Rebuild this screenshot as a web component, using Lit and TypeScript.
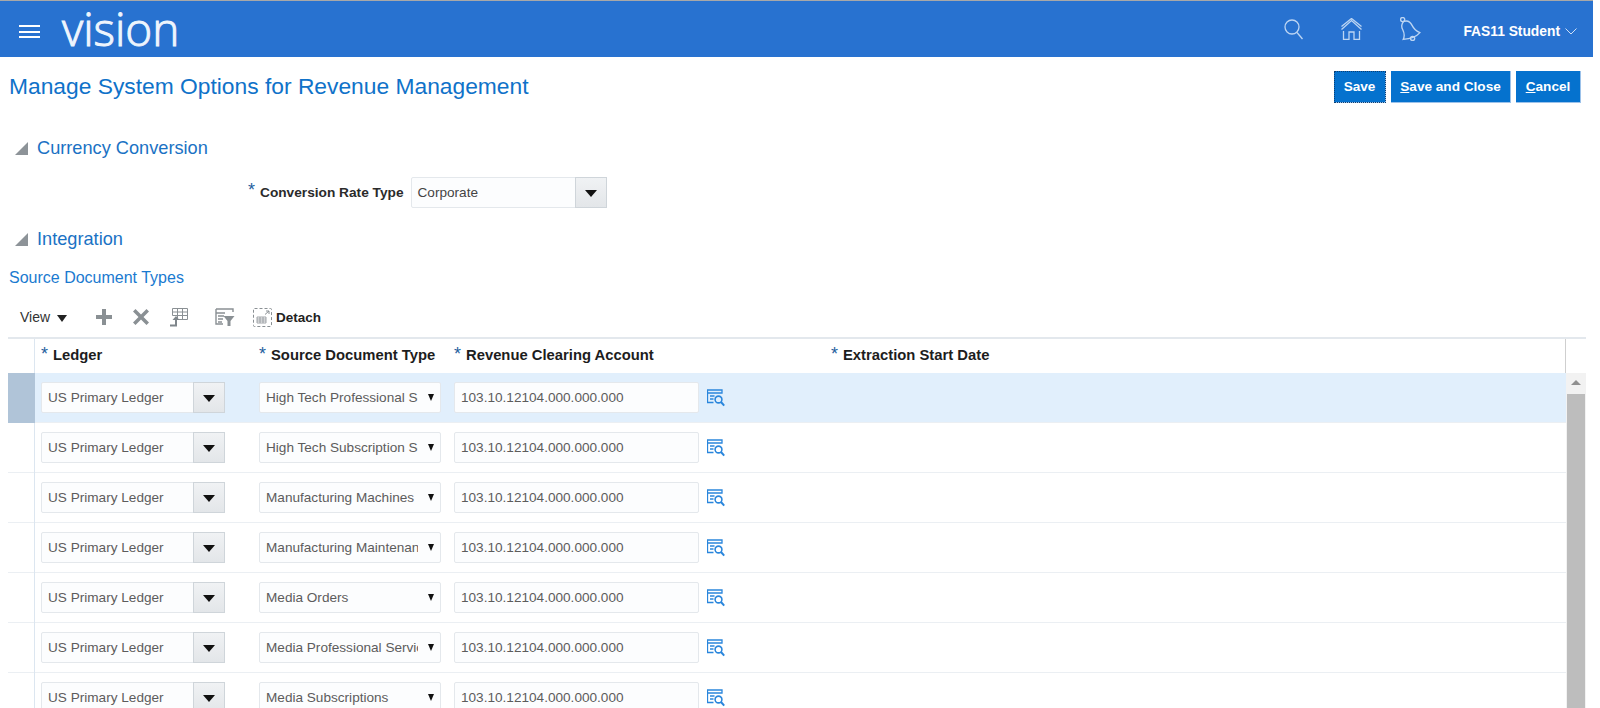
import { LitElement, css, html, svg } from 'lit';
import { customElement } from 'lit/decorators.js';

const sourceTypes = [
  'High Tech Professional Services',
  'High Tech Subscription Services',
  'Manufacturing Machines',
  'Manufacturing Maintenance',
  'Media Orders',
  'Media Professional Services',
  'Media Subscriptions',
];

const lookupIcon = html`<svg class="lookup" viewBox="0 0 18 18" width="18" height="18" fill="none" stroke="#2a86dc">
  <path d="M.5 1h14.500v3H.5zM.5 4v9.500h6M3 7h4.500M3 10h3.500" stroke-width="1.300"/>
  <circle cx="11.500" cy="10.500" r="3.400" stroke-width="1.600"/>
  <path d="M14 13l3.200 3.600" stroke-width="2"/>
</svg>`;

const searchIcon = svg`<circle cx="10" cy="9" r="7" /><path d="M15 14.500l5.500 6.500" />`;
const homeIcon = svg`<path d="M1.500 11.500L11.500 2.500L21.500 11.500M3.500 13v8.500h5.500v-7.500h5v7.500h5.500V13M1.500 8.500L11.500 0.500L21.500 8.500" />`;
const bellIcon = svg`<circle cx="2.500" cy="2.500" r="2" /><circle cx="12" cy="20.500" r="2" /><path d="M3.500 4.300C7 3 10 5 11.500 8c1.500 3 4 5.500 7.500 7-3 3.500-9 6-16 6.500 2-4 1-6.500-.5-9.500C1 9.500 1.500 6 3.500 4.300z" />`;

@customElement('app-root')
export class AppRoot extends LitElement {
  static styles = css`
    :host {
      display: block;
      height: 708px;
      overflow: hidden;
      background: #fff;
      font-family: 'Liberation Sans', Arial, sans-serif;
      color: #333;
    }
    .brand-bar {
      width: 1593px;
      height: 56px;
      box-sizing: content-box;
      border-top: 1px solid #a8a8a8;
      background: #2872d0;
      display: flex;
      align-items: center;
      color: #fff;
    }
    .burger {
      width: 21px;
      height: 13px;
      margin: 5px 0 0 19px;
      border-top: 2px solid #fff;
      border-bottom: 2px solid #fff;
      box-sizing: border-box;
      position: relative;
    }
    .burger::after {
      content: '';
      position: absolute;
      left: 0;
      right: 0;
      top: 3.5px;
      height: 2px;
      background: #fff;
    }
    .logo {
      font-family: 'Open Sans', sans-serif;
      font-weight: 300;
      font-size: 46px;
      line-height: 56px;
      margin: -2px 0 0 22px;
      color: #eef5fd;
      -webkit-text-stroke: 1px #eef5fd;
    }
    .brand-right {
      margin-left: auto;
      display: flex;
      align-items: center;
    }
    .brand-right svg.glyph {
      fill: none;
      stroke: #bcd5f3;
      stroke-width: 1.3;
      display: block;
    }
    .user {
      font-size: 13.8px;
      font-weight: bold;
      margin-left: 42px;
      margin-top: 5px;
    }
    .chev {
      margin: 5px 16px 0 5px;
    }
    .title-row {
      display: flex;
      justify-content: space-between;
      align-items: flex-start;
      padding: 14px 19px 0 9px;
      height: 60px;
      box-sizing: border-box;
    }
    h1 {
      margin: 0;
      font-size: 22.8px;
      line-height: 30px;
      font-weight: normal;
      color: #0f72c9;
    }
    .actions {
      display: flex;
      gap: 5px;
    }
    button {
      height: 32px;
      border: 0;
      border-right: 1px solid #9cc2ea;
      border-bottom: 1px solid #9cc2ea;
      background: #0572ce;
      color: #fff;
      font: bold 13.6px 'Liberation Sans', Arial, sans-serif;
      padding: 0;
    }
    button.focused {
      outline: 1px dotted #0b3f73;
      outline-offset: -1px;
    }
    .section-head {
      display: flex;
      align-items: center;
      color: #1a72c4;
      font-size: 18.2px;
      line-height: 24px;
      padding-left: 15px;
    }
    .disclosure {
      width: 0;
      height: 0;
      border-left: 13px solid transparent;
      border-bottom: 13px solid #8d9398;
      margin: 0 9px 0 0;
    }
    .currency {
      margin-top: 19px;
    }
    .rate-row {
      display: flex;
      align-items: center;
      margin: 17px 0 0 248px;
      height: 31px;
    }
    .req {
      color: #1f5f9e;
      font-weight: normal;
      font-size: 18px;
      line-height: 14px;
      align-self: flex-start;
    }
    .rate-row .req {
      margin-top: 6px;
    }
    .rate-label {
      font-size: 13.7px;
      font-weight: bold;
      margin: 0 7px 0 5px;
      color: #2b2b2b;
    }
    .combo {
      display: flex;
      height: 31px;
      box-sizing: border-box;
      background: #fcfdfe;
      border: 1px solid #e4e8ec;
      border-radius: 2px;
      font-size: 13.6px;
      color: #5c5c5c;
    }
    .combo .value {
      flex: 1;
      line-height: 29px;
      padding-left: 6px;
      white-space: nowrap;
      overflow: hidden;
    }
    .combo .drop {
      width: 32px;
      margin: -1px -1px -1px 0;
      background: linear-gradient(#f0f2f4, #e3e6e9);
      border: 1px solid #cfd5da;
      box-sizing: border-box;
      display: flex;
      align-items: center;
      justify-content: center;
    }
    .combo .drop i {
      border-left: 6px solid transparent;
      border-right: 6px solid transparent;
      border-top: 7px solid #111;
      margin-top: 2px;
    }
    .rate {
      width: 196px;
      color: #444;
    }
    .integration {
      margin-top: 19px;
    }
    .sub-head {
      margin: 17px 0 0 9px;
      font-size: 16px;
      line-height: 20px;
      color: #1a7ad0;
    }
    .toolbar {
      display: flex;
      align-items: center;
      height: 30px;
      margin: 14px 0 5px 20px;
      font-size: 14px;
      color: #333;
    }
    .toolbar .caret {
      border-left: 5.5px solid transparent;
      border-right: 5.5px solid transparent;
      border-top: 7px solid #222;
      margin: 3px 28px 0 7px;
    }
    .toolbar svg {
      display: block;
      flex: none;
    }
    .toolbar b {
      font-size: 13.5px;
      color: #222;
      margin-left: 4px;
    }
    .table {
      margin-left: 8px;
      width: 1578px;
    }
    .head {
      display: flex;
      height: 36px;
      border-top: 2px solid #e3e8ed;
      box-sizing: border-box;
      font-size: 14.8px;
      font-weight: bold;
      color: #1d1d1d;
    }
    .head .corner {
      width: 26px;
      border-right: 1px solid #dce6f0;
    }
    .head .col {
      display: flex;
      align-items: flex-start;
      gap: 4px;
      line-height: 32px;
    }
    .head .col .req {
      margin-top: 8px;
      width: 8px;
    }
    .head .end {
      margin-left: auto;
      width: 20px;
      border-left: 1px solid #cfcfcf;
    }
    .c-ledger {
      width: 218px;
      margin-left: 6px;
    }
    .c-source {
      width: 195px;
    }
    .c-account {
      width: 377px;
    }
    .body {
      display: flex;
      align-items: flex-start;
    }
    .rows {
      flex: 1;
    }
    .row {
      display: flex;
      align-items: flex-start;
      height: 50px;
      box-sizing: border-box;
      border-bottom: 1px solid #ebeff3;
    }
    .row.selected {
      background: #e1effc;
    }
    .row .sel {
      width: 26px;
      height: 50px;
      flex: none;
      border-right: 1px solid #dce6f0;
    }
    .row.selected .sel {
      background: #b0c4d8;
      border-right-color: #b0c4d8;
    }
    .row .combo {
      width: 184px;
      margin: 9px 34px 0 6px;
    }
    .native {
      width: 182px;
      height: 31px;
      margin: 9px 13px 0 0;
      box-sizing: border-box;
      background: #fcfdfe;
      border: 1px solid #e4e8ec;
      border-radius: 2px;
      display: flex;
      align-items: center;
      font-size: 13.6px;
      color: #5c5c5c;
    }
    .native span {
      width: 152px;
      margin-left: 6px;
      overflow: hidden;
      white-space: nowrap;
    }
    .native i {
      margin-left: 10px;
      border-left: 3.5px solid transparent;
      border-right: 3.5px solid transparent;
      border-top: 7px solid #111;
    }
    .account {
      width: 245px;
      height: 31px;
      margin-top: 9px;
      box-sizing: border-box;
      background: #fcfdfe;
      border: 1px solid #e4e8ec;
      border-radius: 2px;
      padding-left: 6px;
      line-height: 30px;
      font-size: 13.6px;
      color: #5c5c5c;
    }
    .lookup {
      margin: 16px 0 0 8px;
      display: block;
    }
    .scroll {
      width: 20px;
      height: 340px;
      flex: none;
      background: #f2f2f2;
      display: flex;
      flex-direction: column;
      align-items: center;
    }
    .scroll .up {
      margin-top: 7px;
      border-left: 5px solid transparent;
      border-right: 5px solid transparent;
      border-bottom: 5px solid #909090;
    }
    .scroll .thumb {
      margin-top: 9px;
      width: 18px;
      flex: 1;
      background: #bdbdbd;
    }
  `;

  renderRow(source: string, index: number) {
    return html`<div class="row ${index === 0 ? 'selected' : ''}">
      <div class="sel"></div>
      <div class="combo">
        <div class="value">US Primary Ledger</div>
        <div class="drop"><i></i></div>
      </div>
      <div class="native"><span>${source}</span><i></i></div>
      <div class="account">103.10.12104.000.000.000</div>
      ${lookupIcon}
    </div>`;
  }

  render() {
    return html`
      <div class="brand-bar">
        <div class="burger"></div>
        <div class="logo">vision</div>
        <div class="brand-right">
          <svg class="glyph" viewBox="0 0 22 22" width="22" height="22">${searchIcon}</svg>
          <svg class="glyph" style="margin-left:36px" viewBox="0 0 23 22" width="23" height="22">${homeIcon}</svg>
          <svg class="glyph" style="margin-left:37px" viewBox="0 0 20 23" width="21" height="24">${bellIcon}</svg>
          <div class="user">FAS11 Student</div>
          <svg class="chev" viewBox="0 0 12 7" width="12" height="7" fill="none" stroke="#cfe0f6" stroke-width="1"><path d="M.5.500L6 6l5.500-5.500"/></svg>
        </div>
      </div>

      <div class="title-row">
        <h1>Manage System Options for Revenue Management</h1>
        <div class="actions">
          <button class="focused" style="width:52px">Save</button>
          <button style="width:120px"><u>S</u>ave and Close</button>
          <button style="width:65px"><u>C</u>ancel</button>
        </div>
      </div>

      <div class="section-head currency"><span class="disclosure"></span>Currency Conversion</div>
      <div class="rate-row">
        <span class="req">*</span>
        <span class="rate-label">Conversion Rate Type</span>
        <div class="combo rate">
          <div class="value">Corporate</div>
          <div class="drop"><i></i></div>
        </div>
      </div>

      <div class="section-head integration"><span class="disclosure"></span>Integration</div>
      <div class="sub-head">Source Document Types</div>

      <div class="toolbar">
        View<span class="caret"></span>
        <svg viewBox="0 0 18 18" width="18" height="18" fill="#8a9094"><path d="M7 1h4v6h6v4h-6v6H7v-6H1V7h6z"/></svg>
        <svg style="margin-left:19px" viewBox="0 0 18 18" width="18" height="18" fill="#8a9094"><path d="M3.500 1L9 6.500 14.500 1 17 3.500 11.500 9l5.500 5.500-2.500 2.500L9 11.500 3.500 17 1 14.500 6.500 9 1 3.500z"/></svg>
        <svg style="margin-left:19px" viewBox="0 0 19 20" width="19" height="20" fill="none" stroke="#8a9094"><path d="M3.500 1.500h15v11h-10M3.500 1.500v7M3.500 5h15M3.500 8.500h15M8.500 1.500v11M13.500 1.500v11"/><path d="M1 18.500h6V12" stroke-width="2" stroke="#7f868b"/><path d="M3.500 13L7 9l3.500 4z" fill="#7f868b" stroke="none"/></svg>
        <svg style="margin-left:27px" viewBox="0 0 20 19" width="20" height="19" fill="none" stroke="#8a9094"><path d="M1 1h17v3M1 1v15h7M1 5h9M3 8h6M3 11h5M3 14h4" stroke-width="1.400"/><path d="M8.500 8h11l-4 5v5h-3v-5z" fill="#8a9094" stroke="none"/></svg>
        <svg style="margin-left:18px" viewBox="0 0 19 19" width="19" height="19" fill="none" stroke="#8a9094"><rect x=".5" y=".5" width="18" height="18" stroke-dasharray="3 2" rx="1"/><path d="M4 9h9v6H4zM4 11h9M4 13h9M7 9v6M10 9v6" stroke-width=".8"/><path d="M12 6.500L16 3M13 3h3v3" stroke-width="1"/></svg>
        <b>Detach</b>
      </div>

      <div class="table">
        <div class="head">
          <div class="corner"></div>
          <div class="col c-ledger"><span class="req">*</span>Ledger</div>
          <div class="col c-source"><span class="req">*</span>Source Document Type</div>
          <div class="col c-account"><span class="req">*</span>Revenue Clearing Account</div>
          <div class="col"><span class="req">*</span>Extraction Start Date</div>
          <div class="end"></div>
        </div>
        <div class="body">
          <div class="rows">${sourceTypes.map((s, i) => this.renderRow(s, i))}</div>
          <div class="scroll"><span class="up"></span><span class="thumb"></span></div>
        </div>
      </div>
    `;
  }
}
